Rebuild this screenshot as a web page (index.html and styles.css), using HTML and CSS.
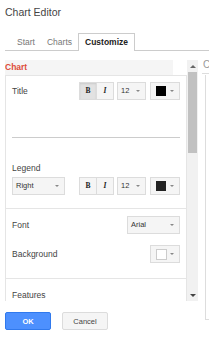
FILE: index.html
```html
<!DOCTYPE html>
<html lang="en">
<head>
    <meta charset="UTF-8">
    <meta name="viewport" content="width=device-width, initial-scale=1.0">
    <title>Chart Editor</title>
    <link rel="stylesheet" href="styles.css">
</head>
<body>

    <div class="heading">Chart Editor</div>

    <div class="tabs">
        <div class="tab first">Start</div>
        <div class="tab">Charts</div>
        <div class="tab active">Customize</div>
    </div>

    <div class="main">
        <div class="left">
            <div class="scroll">
                <div class="panel">
                    <div class="band">Chart</div>
                    <div class="card">
                        <div class="section first-section">
                            <div class="row">
                                <span class="label">Title</span>
                                <div class="controls">
                                    <div class="style-group">
                                        <span class="btn-b pressed">B</span>
                                        <span class="btn-i">I</span>
                                    </div>
                                    <div class="select size">12<span class="arrow"></span></div>
                                    <div class="select color"><span class="swatch"></span><span class="arrow"></span></div>
                                </div>
                            </div>
                            <div class="title-input"></div>
                            <div class="label legend-label">Legend</div>
                            <div class="row legend-row">
                                <div class="select position">Right<span class="arrow"></span></div>
                                <div class="controls">
                                    <div class="style-group">
                                        <span class="btn-b">B</span>
                                        <span class="btn-i">I</span>
                                    </div>
                                    <div class="select size">12<span class="arrow"></span></div>
                                    <div class="select color"><span class="swatch dark"></span><span class="arrow"></span></div>
                                </div>
                            </div>
                        </div>
                        <div class="section second-section">
                            <div class="row">
                                <span class="label">Font</span>
                                <div class="select font">Arial<span class="arrow"></span></div>
                            </div>
                            <div class="row bg-row">
                                <span class="label">Background</span>
                                <div class="select color"><span class="swatch white"></span><span class="arrow"></span></div>
                            </div>
                        </div>
                        <div class="section third-section">
                            <div class="label">Features</div>
                        </div>
                    </div>
                </div>
                <div class="scrollbar">
                    <div class="sb-btn"><span class="up"></span></div>
                    <div class="thumb"></div>
                    <div class="sb-space"></div>
                    <div class="sb-btn"><span class="down"></span></div>
                </div>
            </div>
            <div class="buttons">
                <button class="button ok">OK</button>
                <button class="button cancel">Cancel</button>
            </div>
        </div>
        <div class="preview">
            <div class="preview-head">C</div>
            <div class="preview-box"></div>
        </div>
    </div>

</body>
</html>
```

FILE: styles.css
```css
body {
    font-family: 'Liberation Sans', Arial, sans-serif;
    margin: 0;
    padding: 0;
    background-color: #fff;
    color: #444;
    width: 209px;
    height: 344px;
    overflow: hidden;
}
.heading {
    padding: 5px 5px 0;
    font-size: 10.5px;
    line-height: 14px;
    color: #444;
}
.tabs {
    display: flex;
    margin: 14px 0 0 5px;
    height: 17px;
    border-bottom: 1px solid #ccc;
}
.tab {
    font-size: 8.5px;
    line-height: 17px;
    padding: 0 5px;
    color: #777;
    border: 1px solid transparent;
    border-bottom: none;
}
.tab.first {
    margin-left: 6px;
}
.tab.active {
    padding: 0 6px;
    height: 17px;
    color: #222;
    font-weight: bold;
    border-color: #ccc;
    background-color: #fff;
    margin-bottom: -1px;
    line-height: 16px;
}
.main {
    display: flex;
    margin-top: 9px;
    padding-left: 5px;
}
.left {
    width: 193px;
}
.scroll {
    display: flex;
    height: 241px;
}
.panel {
    width: 182px;
    overflow: hidden;
}
.band {
    width: 168px;
    height: 15px;
    line-height: 15px;
    background-color: #f5f5f5;
    color: #dd4b39;
    font-weight: bold;
    font-size: 8.5px;
}
.card {
    border: 1px solid #e5e5e5;
    border-bottom: none;
    height: 240px;
}
.section {
    padding: 0 6px;
    border-bottom: 1px solid #e5e5e5;
}
.first-section {
    padding-top: 6px;
    padding-bottom: 13px;
}
.second-section {
    padding-top: 7px;
    padding-bottom: 15px;
}
.third-section {
    padding-top: 10px;
    border-bottom: none;
}
.row {
    display: flex;
    align-items: center;
    justify-content: space-between;
    height: 18px;
}
.label {
    font-size: 8.5px;
    line-height: 12px;
    color: #444;
}
.title-input {
    height: 37px;
    border-bottom: 1px solid #ccc;
}
.legend-label {
    margin-top: 24px;
}
.legend-row {
    margin-top: 3px;
}
.bg-row {
    margin-top: 11px;
}
.controls {
    display: flex;
    align-items: center;
}
.style-group {
    display: flex;
    height: 18px;
    border: 1px solid #dcdcdc;
    box-sizing: border-box;
}
.style-group span {
    width: 16px;
    text-align: center;
    font-size: 7.5px;
    line-height: 16px;
    color: #222;
    font-weight: bold;
    background-color: #f5f5f5;
}
.btn-b {
    font-family: 'Liberation Serif', serif;
    border-right: 1px solid #dcdcdc;
}
.btn-i {
    font-family: 'Liberation Serif', serif;
    font-style: italic;
}
.style-group .pressed {
    background-color: #e2e2e2;
    box-shadow: inset 0 1px 2px rgba(0, 0, 0, 0.1);
}
.select {
    position: relative;
    height: 18px;
    box-sizing: border-box;
    border: 1px solid #dcdcdc;
    background-color: #f5f5f5;
    font-size: 7.5px;
    line-height: 16px;
    color: #333;
    padding-left: 3px;
}
.arrow {
    position: absolute;
    top: 7px;
    right: 5px;
    width: 0;
    height: 0;
    border-left: 2px solid transparent;
    border-right: 2px solid transparent;
    border-top: 2px solid #888;
}
.size {
    width: 29px;
    margin-left: 3px;
}
.color {
    width: 30px;
    margin-left: 4px;
}
.swatch {
    display: block;
    width: 10px;
    height: 10px;
    margin: 3px 0 0 2px;
    background-color: #000;
}
.swatch.dark {
    background-color: #222;
}
.swatch.white {
    width: 9px;
    height: 9px;
    background-color: #fff;
    border: 1px solid #ccc;
    margin-top: 3px;
}
.position {
    width: 53px;
}
.font {
    width: 53px;
}
.scrollbar {
    width: 11px;
    background-color: #f1f1f1;
    display: flex;
    flex-direction: column;
}
.sb-btn {
    height: 12px;
    display: flex;
    align-items: center;
    justify-content: center;
}
.up {
    border-left: 3px solid transparent;
    border-right: 3px solid transparent;
    border-bottom: 3px solid #666;
}
.down {
    border-left: 3px solid transparent;
    border-right: 3px solid transparent;
    border-top: 3px solid #444;
}
.thumb {
    height: 81px;
    margin: 0 1px;
    background-color: #c1c1c1;
}
.sb-space {
    flex: 1;
}
.buttons {
    display: flex;
    margin-top: 11px;
}
.button {
    width: 46px;
    height: 18px;
    padding: 0;
    font-family: 'Liberation Sans', Arial, sans-serif;
    font-size: 7.5px;
    border-radius: 2px;
    cursor: pointer;
}
.ok {
    background-color: #4d90fe;
    border: 1px solid #3079ed;
    color: #fff;
    font-weight: bold;
}
.cancel {
    margin-left: 11px;
    background-color: #f5f5f5;
    border: 1px solid #dcdcdc;
    color: #444;
}
.preview {
    margin-left: 4px;
    flex: 1;
    overflow: hidden;
}
.preview-head {
    height: 13px;
    padding-left: 1px;
    font-size: 10px;
    line-height: 10px;
    color: #999;
    border-bottom: 1px solid #ddd;
}
.preview-box {
    margin: 1px 0 0 3px;
    height: 244px;
    border-left: 1px solid #ddd;
    border-bottom: 1px solid #ddd;
}
```
